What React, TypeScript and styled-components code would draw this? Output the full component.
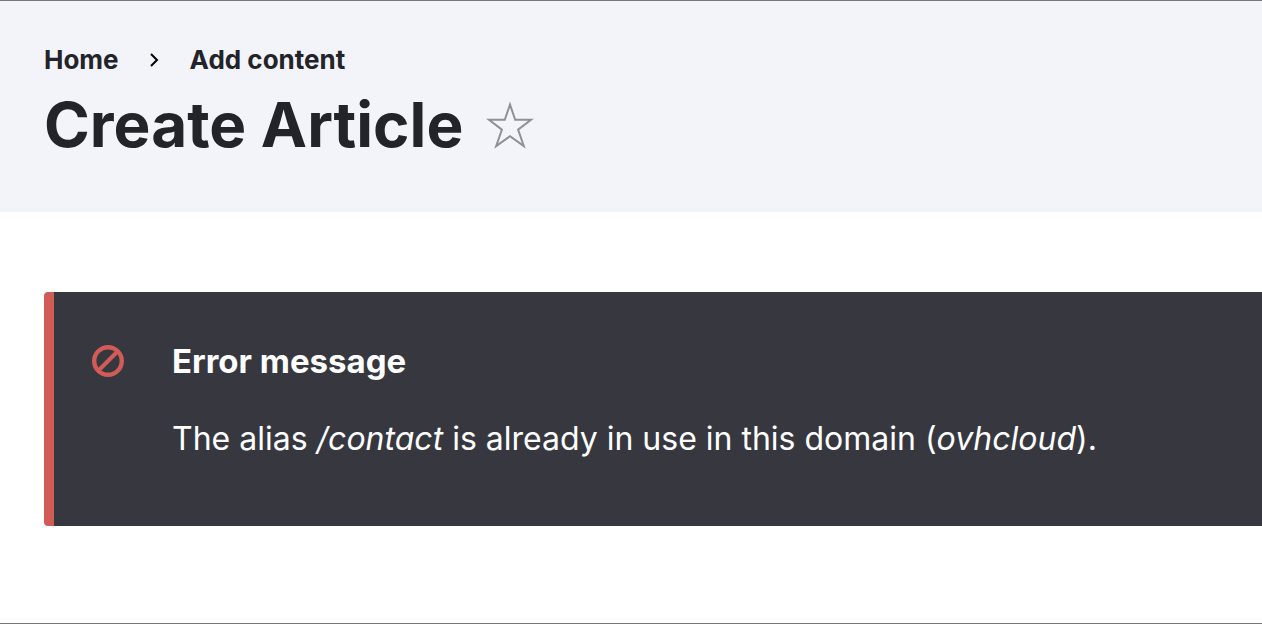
import React from "react";
import styled, { createGlobalStyle } from "styled-components";

const GlobalStyle = createGlobalStyle`
  * { box-sizing: border-box; }
  body {
    margin: 0;
    background: #fff;
    color: #232429;
    font-family: Inter, "Liberation Sans", sans-serif;
  }
`;

const Page = styled.div`
  display: flex;
  flex-direction: column;
  min-height: 100vh;
  border-top: 1px solid #76777c;
  border-bottom: 1px solid #76777c;
  overflow: hidden;
`;

const Header = styled.header`
  background: #f3f4f9;
  padding: 43px 44px 47px;
`;

const Breadcrumb = styled.nav`
  display: flex;
  align-items: center;
  gap: 31px;
  font-size: 26px;
  line-height: 32px;
  font-weight: 700;
`;

const Crumb = styled.a`
  color: inherit;
  text-decoration: none;
`;

const TitleRow = styled.div`
  display: flex;
  align-items: center;
  gap: 22px;
  margin-top: 9px;
`;

const Title = styled.h1`
  margin: 0;
  font-size: 62px;
  line-height: 80px;
  font-weight: 700;
`;

const StarButton = styled.button`
  display: flex;
  padding: 0;
  border: 0;
  background: none;
`;

const Content = styled.main`
  padding: 80px 0 80px 44px;
`;

const Message = styled.section`
  display: flex;
  align-items: flex-start;
  gap: 47px;
  padding: 48px 38px 65px;
  border-left: 10px solid #d15b56;
  border-radius: 4px 0 0 4px;
  background: #373740;
  color: #fff;
`;

const MessageIcon = styled.svg`
  flex: none;
  margin-top: 5px;
`;

const MessageTitle = styled.h2`
  margin: 0 0 35px;
  font-size: 33px;
  line-height: 42px;
  font-weight: 700;
`;

const MessageText = styled.p`
  margin: 0;
  font-size: 32px;
  line-height: 44px;
`;

export default function App() {
  return (
    <>
      <GlobalStyle />
      <Page>
        <Header>
          <Breadcrumb aria-label="Breadcrumb">
            <Crumb href="#home">Home</Crumb>
            <svg width="9" height="14" viewBox="0 0 9 14" fill="none" stroke="#000" strokeWidth="2" aria-hidden="true">
              <path d="M1 1l6 6-6 6" />
            </svg>
            <Crumb href="#add">Add content</Crumb>
          </Breadcrumb>
          <TitleRow>
            <Title>Create Article</Title>
            <StarButton type="button" aria-label="Add to shortcuts">
              <svg width="50" height="50" viewBox="0 0 50 50" fill="none" stroke="#8e9097" strokeWidth="2">
                <path d="M25 4.500L30.200 19.800H46L33.100 29.600L38.800 46L25 36.200L11.200 46L16.900 29.600L4 19.800H19.800Z" />
              </svg>
            </StarButton>
          </TitleRow>
        </Header>
        <Content>
          <Message role="alert">
            <MessageIcon width="33" height="33" viewBox="0 0 33 33" fill="none" stroke="#d15b56" strokeWidth="4.400" aria-hidden="true">
              <circle cx="16" cy="16" r="13.800" />
              <path d="M6.500 25.500L25.500 6.500" strokeWidth="4" />
            </MessageIcon>
            <div>
              <MessageTitle>Error message</MessageTitle>
              <MessageText>
                The alias <em>/contact</em> is already in use in this domain (<em>ovhcloud</em>).
              </MessageText>
            </div>
          </Message>
        </Content>
      </Page>
    </>
  );
}
